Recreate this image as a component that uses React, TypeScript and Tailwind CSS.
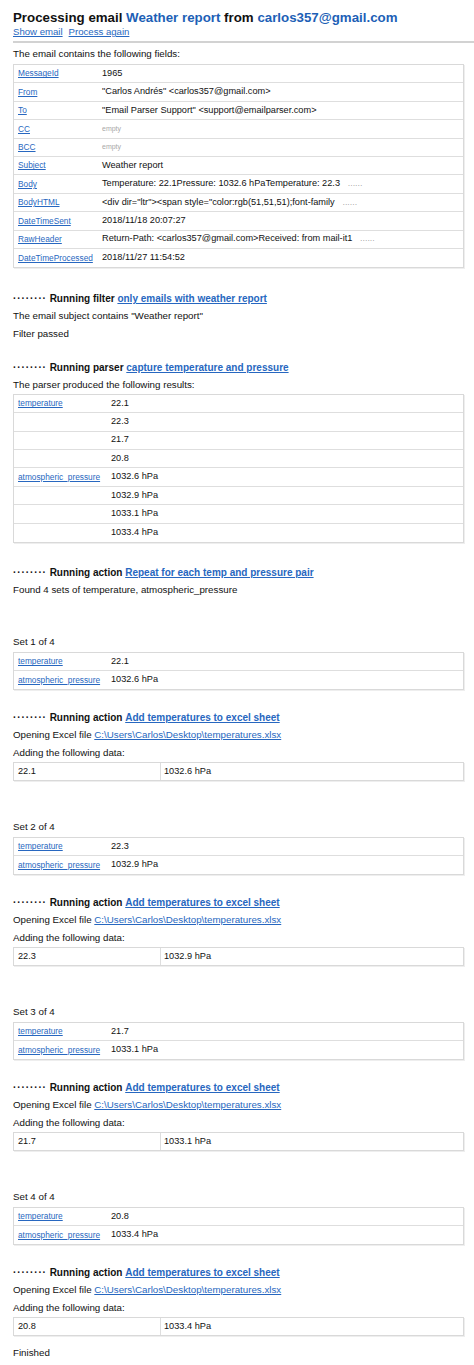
import React from 'react';

const link = 'text-[#2767c0] underline';

type Row = { label?: string; value: React.ReactNode };

function FieldTable({ rows, labelW, rowH }: { rows: Row[]; labelW: string; rowH: string }) {
  return (
    <div className="border border-[#d9d9d9] shadow-[1px_1px_0_#eeeeee] divide-y divide-[#dedede]">
      {rows.map((r, i) => (
        <div key={i} className={`flex items-center ${rowH}`}>
          <div className={`${labelW} shrink-0 pl-1 text-[8.3px]`}>
            {r.label && <a className={link}>{r.label}</a>}
          </div>
          <div className="pl-1 text-[9.2px] text-[#111]">{r.value}</div>
        </div>
      ))}
    </div>
  );
}

function Empty() {
  return <span className="text-[7px] text-[#a8a8a8]">empty</span>;
}

function More() {
  return <span className="ml-2 text-[7px] text-[#777] tracking-[0.5px]">......</span>;
}

function Line({ children, className = '' }: { children: React.ReactNode; className?: string }) {
  return <div className={`h-[17.5px] leading-[17.5px] text-[9.75px] text-[#111] whitespace-nowrap ${className}`}>{children}</div>;
}

function Step({ kind, name, className = '' }: { kind: string; name: string; className?: string }) {
  return (
    <Line className={`text-[10px] ${className}`}>
      <span className="font-bold tracking-[0.9px]">········</span>{' '}
      <b>Running {kind}</b> <a className={`${link} font-bold`}>{name}</a>
    </Line>
  );
}

function SetBlock({ n, temp, pres, first }: { n: number; temp: string; pres: string; first?: boolean }) {
  return (
    <>
      <Line className={first ? 'mt-[34.5px]' : 'mt-[37px]'}>Set {n} of 4</Line>
      <div className="mt-[1.25px]">
        <FieldTable
          labelW="w-[93px]"
          rowH="h-[18px]"
          rows={[
            { label: 'temperature', value: temp },
            { label: 'atmospheric_pressure', value: pres },
          ]}
        />
      </div>
      <Step kind="action" name="Add temperatures to excel sheet" className="mt-[18.5px]" />
      <Line>
        Opening Excel file <a className={link}>C:\Users\Carlos\Desktop\temperatures.xlsx</a>
      </Line>
      <Line>Adding the following data:</Line>
      <div className="mt-[1.25px] flex h-[19px] border border-[#d9d9d9] shadow-[1px_1px_0_#eeeeee] text-[9.2px] text-[#111]">
        <div className="w-[147px] shrink-0 border-r border-[#dedede] pl-1 flex items-center">{temp}</div>
        <div className="pl-[3px] flex items-center">{pres}</div>
      </div>
    </>
  );
}

export default function App() {
  const emailRows: Row[] = [
    { label: 'MessageId', value: '1965' },
    { label: 'From', value: '"Carlos Andrés" <carlos357@gmail.com>' },
    { label: 'To', value: '"Email Parser Support" <support@emailparser.com>' },
    { label: 'CC', value: <Empty /> },
    { label: 'BCC', value: <Empty /> },
    { label: 'Subject', value: 'Weather report' },
    { label: 'Body', value: <>Temperature: 22.1Pressure: 1032.6 hPaTemperature: 22.3<More /></> },
    { label: 'BodyHTML', value: <>{'<div dir="ltr"><span style="color:rgb(51,51,51);font-family'}<More /></> },
    { label: 'DateTimeSent', value: '2018/11/18 20:07:27' },
    { label: 'RawHeader', value: <>{'Return-Path: <carlos357@gmail.com>Received: from mail-it1'}<More /></> },
    { label: 'DateTimeProcessed', value: '2018/11/27 11:54:52' },
  ];

  const resultRows: Row[] = [
    { label: 'temperature', value: '22.1' },
    { value: '22.3' },
    { value: '21.7' },
    { value: '20.8' },
    { label: 'atmospheric_pressure', value: '1032.6 hPa' },
    { value: '1032.9 hPa' },
    { value: '1033.1 hPa' },
    { value: '1033.4 hPa' },
  ];

  const sets = [
    ['22.1', '1032.6 hPa'],
    ['22.3', '1032.9 hPa'],
    ['21.7', '1033.1 hPa'],
    ['20.8', '1033.4 hPa'],
  ];

  return (
    <div className="min-h-[1365px] bg-white pl-[13px] pr-[10px] pt-[10px] pb-6 font-['Liberation_Sans',Arial,sans-serif] text-[#111]">
      <div className="h-[16px] leading-[16px] text-[13.3px] font-bold whitespace-nowrap">
        Processing email <span className="text-[#1d5fb6]">Weather report</span> from{' '}
        <span className="text-[#1d5fb6]">carlos357@gmail.com</span>
      </div>
      <div className="h-[12px] leading-[12px] text-[9.6px] flex gap-[6px]">
        <a className={link}>Show email</a>
        <a className={link}>Process again</a>
      </div>
      <div className="mt-[3px] -mr-[10px] h-[2px] bg-[#d2d2d2]" />

      <Line className="mt-[2px]">The email contains the following fields:</Line>
      <div className="mt-[1.5px]">
        <FieldTable labelW="w-[84px]" rowH="h-[18.4px]" rows={emailRows} />
      </div>

      <Step kind="filter" name="only emails with weather report" className="mt-[21.5px]" />
      <Line>The email subject contains "Weather report"</Line>
      <Line>Filter passed</Line>

      <Step kind="parser" name="capture temperature and pressure" className="mt-[16.5px]" />
      <Line>The parser produced the following results:</Line>
      <FieldTable labelW="w-[93px]" rowH="h-[18.4px]" rows={resultRows} />

      <Step kind="action" name="Repeat for each temp and pressure pair" className="mt-[21px]" />
      <Line>Found 4 sets of temperature, atmospheric_pressure</Line>

      {sets.map(([t, p], i) => (
        <SetBlock key={i} n={i + 1} temp={t} pres={p} first={i === 0} />
      ))}

      <Line className="mt-[8px]">Finished</Line>
    </div>
  );
}
